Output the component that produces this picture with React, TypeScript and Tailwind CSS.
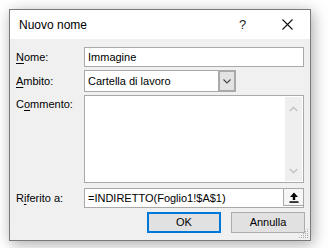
import React from "react";

const U = ({ children }: { children: React.ReactNode }) => (
  <span className="underline underline-offset-[2px] decoration-[1px]">{children}</span>
);

export default function App() {
  return (
    <div className="w-[333px] h-[248px] bg-white p-[9px] font-['Liberation_Sans',Arial,sans-serif] text-black">
      <div className="relative w-[302px] h-[232px] border border-[#7a7a7a] bg-[#f0f0f0] shadow-[2px_3px_14px_rgba(0,0,0,0.35)] flex flex-col">
        {/* title bar */}
        <div className="h-[29px] bg-white flex items-center text-[12px] shrink-0">
          <span className="pl-[9px]">Nuovo nome</span>
          <div className="ml-auto flex h-full">
            <div className="w-[45px] h-full flex items-center justify-center text-[13px] text-[#222]">?</div>
            <div className="w-[45px] h-full flex items-center justify-center">
              <svg width="11" height="11" viewBox="0 0 11 11">
                <path d="M0.5 0.5 L10.5 10.5 M10.5 0.5 L0.5 10.5" stroke="#111" strokeWidth="1.1" fill="none" />
              </svg>
            </div>
          </div>
        </div>
        {/* body */}
        <div className="flex flex-col pl-[6px] pr-[5px] pt-[8px] text-[11px] leading-[13px]">
          {/* Nome */}
          <div className="flex items-center h-[20px]">
            <div className="w-[68px]">
              <U>N</U>ome:
            </div>
            <div className="w-[220px] h-[20px] bg-white border border-[#a9a9a9] flex items-center pl-[3px]">
              Immagine
            </div>
          </div>
          {/* Ambito */}
          <div className="flex items-center h-[22px] mt-[3px]">
            <div className="w-[68px]">
              <U>A</U>mbito:
            </div>
            <div className="w-[152px] h-[22px] flex">
              <div className="flex-1 bg-white border border-[#a9a9a9] border-r-0 flex items-center pl-[3px]">
                Cartella di lavoro
              </div>
              <div className="w-[18px] h-full bg-[#e3e3e3] border-2 border-[#a9a9a9] flex items-center justify-center">
                <svg width="8" height="5" viewBox="0 0 8 5">
                  <path d="M0.5 0.5 L4 4 L7.5 0.5" stroke="#444" strokeWidth="1.1" fill="none" />
                </svg>
              </div>
            </div>
          </div>
          {/* Commento */}
          <div className="flex items-start h-[88px] mt-[3px]">
            <div className="w-[68px] pt-[3px]">
              C<U>o</U>mmento:
            </div>
            <div className="w-[220px] h-[88px] bg-white border border-[#a9a9a9] flex justify-end p-[1px]">
              <div className="w-[17px] h-full bg-[#efefef] flex flex-col items-center justify-between pt-[9px] pb-[7px]">
                <svg width="9" height="6" viewBox="0 0 9 6">
                  <path d="M0.8 5 L4.5 1.3 L8.2 5" stroke="#c4c4c4" strokeWidth="1.6" fill="none" />
                </svg>
                <svg width="9" height="6" viewBox="0 0 9 6">
                  <path d="M0.8 1 L4.5 4.7 L8.2 1" stroke="#c4c4c4" strokeWidth="1.6" fill="none" />
                </svg>
              </div>
            </div>
          </div>
          {/* Riferito a */}
          <div className="flex items-center h-[20px] mt-[5px]">
            <div className="w-[68px]">
              R<U>i</U>ferito a:
            </div>
            <div className="w-[220px] h-[20px] bg-white border border-[#a9a9a9] flex items-center">
              <span className="pl-[3px] flex-1">=INDIRETTO(Foglio1!$A$1)</span>
              <div className="w-[20px] h-[17px] self-start border border-[#a9a9a9] border-t-0 border-r-0 bg-[#f6f6f6] flex items-center justify-center">
                <svg width="10" height="11" viewBox="0 0 10 11">
                  <path d="M5 0.5 L9 5 L6.2 5 L6.2 8 L3.8 8 L3.8 5 L1 5 Z" fill="#000" />
                  <rect x="0.5" y="9.3" width="9" height="1.5" fill="#000" />
                </svg>
              </div>
            </div>
          </div>
          {/* buttons */}
          <div className="flex justify-end gap-[10px] mt-[4px]">
            <div className="w-[74px] h-[21px] bg-[#e1e1e1] border-2 border-[#0078d7] flex items-center justify-center text-[11px]">
              OK
            </div>
            <div className="w-[74px] h-[21px] bg-[#e1e1e1] border border-[#adadad] flex items-center justify-center text-[11px]">
              Annulla
            </div>
          </div>
        </div>
        {/* resize grip */}
        <svg className="absolute right-[1px] bottom-[1px]" width="10" height="10" viewBox="0 0 10 10">
          <g fill="#a8a8a8">
            <rect x="8" y="0" width="1" height="1" />
            <rect x="6" y="2" width="1" height="1" />
            <rect x="8" y="2" width="1" height="1" />
            <rect x="4" y="4" width="1" height="1" />
            <rect x="6" y="4" width="1" height="1" />
            <rect x="8" y="4" width="1" height="1" />
            <rect x="2" y="6" width="1" height="1" />
            <rect x="4" y="6" width="1" height="1" />
            <rect x="6" y="6" width="1" height="1" />
            <rect x="8" y="6" width="1" height="1" />
            <rect x="0" y="8" width="1" height="1" />
            <rect x="2" y="8" width="1" height="1" />
            <rect x="4" y="8" width="1" height="1" />
            <rect x="6" y="8" width="1" height="1" />
            <rect x="8" y="8" width="1" height="1" />
          </g>
        </svg>
      </div>
    </div>
  );
}
